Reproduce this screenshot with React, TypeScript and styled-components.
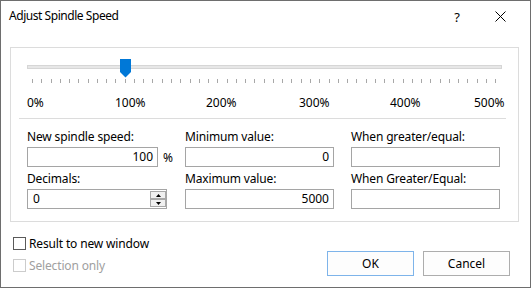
import React from "react";
import styled, { createGlobalStyle } from "styled-components";

const Global = createGlobalStyle`
  html, body { margin: 0; padding: 0; background: #ffffff; }
  body { font-family: "Noto Sans", "Open Sans", sans-serif; font-size: 12px; color: #000; }
  * { box-sizing: border-box; }
`;

const FONT = `"Noto Sans", "Open Sans", sans-serif`;

const Window = styled.div`
  width: 531px;
  height: 288px;
  border: 1px solid #6e6e6e;
  background: #ffffff;
  display: flex;
  flex-direction: column;
  font-family: ${FONT};
  font-size: 12px;
`;

const TitleBar = styled.div`
  height: 31px;
  display: flex;
  align-items: center;
  padding-left: 8px;
  padding-right: 7px;
`;

const Title = styled.div`
  flex: 1;
  line-height: 16px;
  margin-top: -1px;
  letter-spacing: -0.45px;
`;

const TitleButton = styled.div<{ $w: number }>`
  width: ${(p) => p.$w}px;
  height: 31px;
  display: flex;
  align-items: center;
  justify-content: center;
  font-size: 13px;
`;

const Body = styled.div`
  flex: 1;
  display: flex;
  flex-direction: column;
  padding: 15px 11px 0 9px;
`;

const Group = styled.div`
  border: 1px solid #dcdcdc;
  padding: 0 16px 12px 16px;
  display: flex;
  flex-direction: column;
`;

const SliderArea = styled.div`
  position: relative;
  margin-top: 11px;
  height: 25px;
`;

const Track = styled.div`
  margin-top: 6px;
  height: 4px;
  background: #e7e7e7;
  border: 1px solid #d6d6d6;
`;

const Thumb = styled.svg`
  position: absolute;
  top: 0;
  width: 11px;
  height: 19px;
`;

const Ticks = styled.div`
  margin: 10px 5px 0 5px;
  height: 4px;
  display: flex;
  justify-content: space-between;
`;

const Tick = styled.div`
  width: 1px;
  height: 4px;
  background: #a8a8a8;
`;

const ScaleLabels = styled.div`
  margin-top: 11px;
  display: grid;
  grid-template-columns: 88px 91px 93px 91px 84px auto;
  line-height: 16px;
  white-space: nowrap;
`;

const Separator = styled.div`
  margin: 7px -4px 0 -8px;
  height: 1px;
  background: #dcdcdc;
`;

const Fields = styled.div`
  margin-top: 10px;
  display: grid;
  grid-template-columns: 158px 166px 149px;
  row-gap: 4px;
`;

const Field = styled.div`
  display: flex;
  flex-direction: column;
  gap: 2px;
`;

const Label = styled.div`
  line-height: 16px;
  white-space: nowrap;
  letter-spacing: -0.15px;
`;

const InputRow = styled.div`
  display: flex;
  align-items: center;
  gap: 5px;
`;

const TextBox = styled.div<{ $w: number; $align?: string }>`
  position: relative;
  width: ${(p) => p.$w}px;
  height: 20px;
  border: 1px solid #a5a5a5;
  background: #fff;
  display: flex;
  align-items: center;
  justify-content: ${(p) => (p.$align === "right" ? "flex-end" : "flex-start")};
  padding: 0 4px 0 5px;
  line-height: 16px;
`;

const Spinner = styled.div`
  position: absolute;
  right: 0px;
  top: 1px;
  display: flex;
  flex-direction: column;
`;

const SpinButton = styled.div`
  width: 16px;
  height: 8px;
  border: 1px solid #a8a8a8;
  background: #f0f0f0;
  display: flex;
  align-items: center;
  justify-content: center;
`;

const Footer = styled.div`
  flex: 1;
  display: flex;
  justify-content: space-between;
  padding: 10px 9px 12px 3px;
`;

const Checks = styled.div`
  display: flex;
  flex-direction: column;
`;

const CheckRow = styled.div<{ $disabled?: boolean }>`
  height: 22px;
  display: flex;
  align-items: center;
  gap: 3px;
  letter-spacing: -0.15px;
  color: ${(p) => (p.$disabled ? "#a0a0a0" : "#000")};
`;

const Box = styled.div<{ $disabled?: boolean }>`
  width: 13px;
  height: 13px;
  border: 1px solid ${(p) => (p.$disabled ? "#cccccc" : "#5a5a5a")};
  background: #fff;
`;

const Buttons = styled.div`
  display: flex;
  align-items: flex-end;
  gap: 9px;
`;

const Button = styled.div<{ $default?: boolean }>`
  width: 87px;
  height: 25px;
  border: 1px solid ${(p) => (p.$default ? "#7eb4ea" : "#adadad")};
  background: #fdfdfd;
  display: flex;
  align-items: center;
  justify-content: center;
  line-height: 16px;
`;

const Arrow = ({ up }: { up?: boolean }) => (
  <svg width="5" height="3" viewBox="0 0 5 3">
    <path d={up ? "M0 3 L2.5 0 L5 3 Z" : "M0 0 L5 0 L2.5 3 Z"} fill="#000" />
  </svg>
);

const VALUE = 100;

export default function App() {
  const ticks = Array.from({ length: 51 }, (_, i) => i);
  const thumbLeft = (VALUE / 500) * 464;
  return (
    <>
      <Global />
      <Window>
        <TitleBar>
          <Title>Adjust Spindle Speed</Title>
          <TitleButton $w={40}>?</TitleButton>
          <TitleButton $w={46}>
            <svg width="11" height="11" viewBox="0 0 11 11">
              <path d="M0.5 0.5 L10.5 10.5 M10.5 0.5 L0.5 10.5" stroke="#000" strokeWidth="1" />
            </svg>
          </TitleButton>
        </TitleBar>
        <Body>
          <Group>
            <SliderArea>
              <Track />
              <Thumb viewBox="0 0 11 19" style={{ left: thumbLeft }}>
                <path d="M0 0 H11 V13 L5.5 18.5 L0 13 Z" fill="#0078d7" />
              </Thumb>
              <Ticks>
                {ticks.map((t) => (
                  <Tick key={t} />
                ))}
              </Ticks>
            </SliderArea>
            <ScaleLabels>
              <span>0%</span>
              <span>100%</span>
              <span>200%</span>
              <span>300%</span>
              <span>400%</span>
              <span>500%</span>
            </ScaleLabels>
            <Separator />
            <Fields>
              <Field>
                <Label>New spindle speed:</Label>
                <InputRow>
                  <TextBox $w={131} $align="right">100</TextBox>
                  <span>%</span>
                </InputRow>
              </Field>
              <Field>
                <Label>Minimum value:</Label>
                <TextBox $w={149} $align="right">0</TextBox>
              </Field>
              <Field>
                <Label>When greater/equal:</Label>
                <TextBox $w={149} />
              </Field>
              <Field>
                <Label>Decimals:</Label>
                <TextBox $w={140}>
                  0
                  <Spinner>
                    <SpinButton>
                      <Arrow up />
                    </SpinButton>
                    <SpinButton>
                      <Arrow />
                    </SpinButton>
                  </Spinner>
                </TextBox>
              </Field>
              <Field>
                <Label>Maximum value:</Label>
                <TextBox $w={149} $align="right">5000</TextBox>
              </Field>
              <Field>
                <Label>When Greater/Equal:</Label>
                <TextBox $w={149} />
              </Field>
            </Fields>
          </Group>
          <Footer>
            <Checks>
              <CheckRow>
                <Box />
                <span>Result to new window</span>
              </CheckRow>
              <CheckRow $disabled>
                <Box $disabled />
                <span>Selection only</span>
              </CheckRow>
            </Checks>
            <Buttons>
              <Button $default>OK</Button>
              <Button>Cancel</Button>
            </Buttons>
          </Footer>
        </Body>
      </Window>
    </>
  );
}
